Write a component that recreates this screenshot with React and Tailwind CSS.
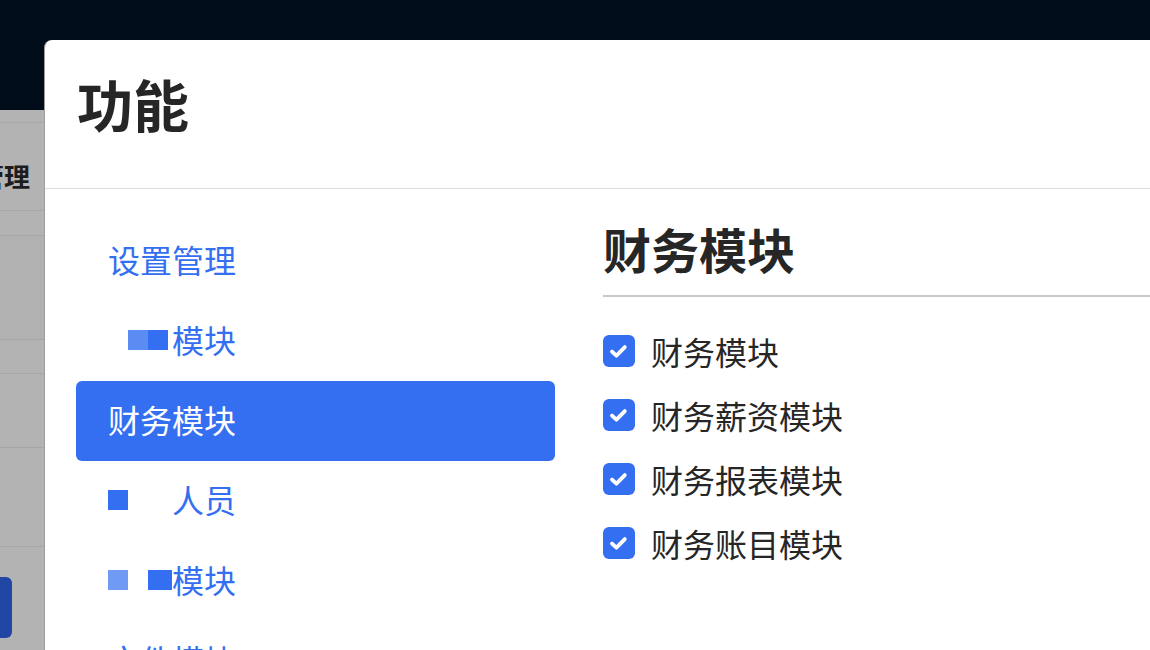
import React from "react";

const navItems = [
  { key: "settings", label: "设置管理" },
  { key: "m1", label: "模块", masked: "pair" },
  { key: "finance", label: "财务模块", active: true },
  { key: "people", label: "人员", masked: "single" },
  { key: "m2", label: "模块", masked: "split" },
  { key: "files", label: "文件模块" },
];

const checks = ["财务模块", "财务薪资模块", "财务报表模块", "财务账目模块"];

const Mask = ({ type }) => {
  if (type === "pair") {
    return (
      <span className="flex w-[64px] items-center pl-[20px] pt-[3px]">
        <span className="h-[20px] w-[20px] bg-[#5b8cf3]" />
        <span className="h-[20px] w-[20px] bg-[#346ff1]" />
      </span>
    );
  }
  if (type === "single") {
    return (
      <span className="flex w-[64px] items-center pt-[3px]">
        <span className="h-[20px] w-[20px] bg-[#346ff1]" />
      </span>
    );
  }
  return (
    <span className="flex w-[64px] items-center pt-[3px]">
      <span className="h-[20px] w-[20px] bg-[#6f9bf5]" />
      <span className="ml-[20px] h-[20px] w-[24px] bg-[#346ff1]" />
    </span>
  );
};

const CheckBox = () => (
  <span className="flex h-[32px] w-[32px] shrink-0 items-center justify-center rounded-[6px] bg-[#346ff1]">
    <svg width="32" height="32" viewBox="0 0 32 32" fill="none">
      <path
        d="M9 16.6l4.4 4.1 8.4-8.6"
        stroke="white"
        strokeWidth="3.8"
        strokeLinecap="round"
        strokeLinejoin="round"
      />
    </svg>
  </span>
);

export default function App() {
  return (
    <div
      className="relative h-[650px] w-[1150px] overflow-hidden bg-[#b3b3b3]"
      style={{ fontFamily: '"Noto Sans CJK SC", "Noto Sans", sans-serif' }}
    >
      {/* dimmed page behind the dialog */}
      <div className="h-[110px] bg-[#020d1c]" />
      <div className="flex flex-col">
        <div className="h-[13px] border-b border-[#a9a9a9]" />
        <div className="flex h-[88px] items-center border-b border-[#a6a6a6] pt-[18px]">
          <span className="ml-[-22px] text-[26px] font-bold leading-none text-[#1c1c1c]">管理</span>
        </div>
        <div className="h-[25px] border-b border-[#a6a6a6]" />
        <div className="h-[104px] border-b border-[#a6a6a6] bg-[#b1b1b1]" />
        <div className="h-[34px] border-b border-[#a6a6a6]" />
        <div className="h-[74px] border-b border-[#a6a6a6]" />
        <div className="h-[99px] border-b border-[#a6a6a6]" />
        <div className="pt-[30px]">
          <div className="ml-[-10px] h-[61px] w-[22px] rounded-[6px] bg-[#2146a6]" />
        </div>
      </div>

      {/* dialog */}
      <div className="absolute left-[44px] top-[40px] h-[640px] w-[1120px] rounded-tl-[8px] border-l border-[#9d9d9d] bg-white">
        <div className="h-[149px] border-b border-[#dcdde2] pl-[32px] pt-[35px]">
          <h1 className="text-[56px] font-bold leading-none text-[#262626]">功能</h1>
        </div>
        <div className="flex gap-[48px] pl-[31px] pt-[32px]">
          <ul className="flex w-[479px] shrink-0 flex-col">
            {navItems.map((item) => (
              <li
                key={item.key}
                className={`flex h-[80px] items-center rounded-[6px] pb-[5px] pl-[32px] text-[32px] leading-none ${
                  item.active ? "bg-[#346ff1] text-white" : "text-[#346ff1]"
                }`}
              >
                {item.masked && <Mask type={item.masked} />}
                <span>{item.label}</span>
              </li>
            ))}
          </ul>
          <div className="flex-1">
            <h2 className="border-b-2 border-[#c9c9c9] pb-[23px] pt-[3px] text-[48px] font-bold leading-none text-[#262626]">
              财务模块
            </h2>
            <div className="flex flex-col gap-[32px] pt-[38px]">
              {checks.map((c) => (
                <label key={c} className="flex h-[32px] items-center gap-[16px]">
                  <CheckBox />
                  <span className="text-[32px] leading-[32px] text-[#262626]">{c}</span>
                </label>
              ))}
            </div>
          </div>
        </div>
      </div>
    </div>
  );
}
